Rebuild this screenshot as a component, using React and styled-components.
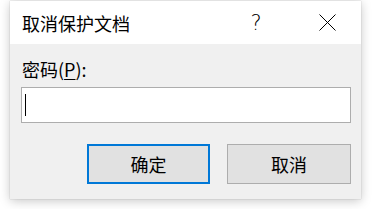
import React from "react";
import styled, { createGlobalStyle } from "styled-components";

const GlobalStyle = createGlobalStyle`
  html, body {
    margin: 0;
    padding: 0;
    background: #ffffff;
  }
  body {
    width: 372px;
    height: 209px;
    overflow: hidden;
    font-family: "Noto Sans CJK SC", "Noto Sans", sans-serif;
  }
`;

const Page = styled.div`
  padding: 1px 0 0 10px;
`;

const Dialog = styled.div`
  width: 351px;
  height: 198px;
  display: flex;
  flex-direction: column;
  background: #f0f0f0;
  box-shadow: 0 2px 10px rgba(0, 0, 0, 0.22), 0 0 1px rgba(0, 0, 0, 0.25);
`;

const TitleBar = styled.div`
  height: 43px;
  display: flex;
  align-items: center;
  background: #ffffff;
  padding: 0 11px 0 12px;
`;

const Title = styled.div`
  flex: 1;
  font-size: 18px;
  line-height: 22px;
  color: #000;
`;

const TitleButton = styled.div`
  width: ${(p) => p.w}px;
  height: 43px;
  display: flex;
  align-items: center;
  justify-content: center;
  margin-left: ${(p) => p.gap || 0}px;
`;

const Help = styled.span`
  font-family: "DejaVu Sans", "Liberation Sans", sans-serif;
  font-weight: 200;
  font-size: 21px;
  line-height: 22px;
  color: #000;
  margin-top: 1px;
`;

const Body = styled.div`
  flex: 1;
  display: flex;
  flex-direction: column;
  padding: 14px 10px 15px 11px;
`;

const Label = styled.div`
  font-size: 18px;
  line-height: 22px;
  color: #000;
  margin-left: 1px;
`;

const Key = styled.span`
  text-decoration: underline;
  text-underline-offset: 2px;
`;

const TextBox = styled.div`
  margin-top: 7px;
  height: 36px;
  box-sizing: border-box;
  border: 1px solid #adadad;
  background: #ffffff;
  display: flex;
  align-items: center;
  padding-left: 3px;
`;

const Caret = styled.span`
  width: 1px;
  height: 22px;
  background: #000;
`;

const Buttons = styled.div`
  margin-top: 21px;
  display: flex;
  justify-content: flex-end;
  gap: 17px;
`;

const Button = styled.button`
  width: ${(p) => p.w}px;
  height: 40px;
  box-sizing: border-box;
  margin: 0;
  padding: 0;
  background: #e1e1e1;
  border: ${(p) => (p.primary ? "2px solid #0078d7" : "1px solid #adadad")};
  font-family: "Noto Sans CJK SC", "Noto Sans", sans-serif;
  font-size: 18px;
  line-height: 22px;
  color: #000;
`;

const CloseIcon = () => (
  <svg width="17" height="17" viewBox="0 0 17 17">
    <path d="M0.5 0.5 L16.5 16.5 M16.5 0.5 L0.5 16.5" stroke="#000" strokeWidth="1" fill="none" />
  </svg>
);

export default function App() {
  return (
    <Page>
      <GlobalStyle />
      <Dialog>
        <TitleBar>
          <Title>取消保护文档</Title>
          <TitleButton w={40}>
            <Help>?</Help>
          </TitleButton>
          <TitleButton w={46} gap={28}>
            <CloseIcon />
          </TitleButton>
        </TitleBar>
        <Body>
          <Label>
            密码(<Key>P</Key>):
          </Label>
          <TextBox>
            <Caret />
          </TextBox>
          <Buttons>
            <Button primary w={123}>确定</Button>
            <Button w={124}>取消</Button>
          </Buttons>
        </Body>
      </Dialog>
    </Page>
  );
}
